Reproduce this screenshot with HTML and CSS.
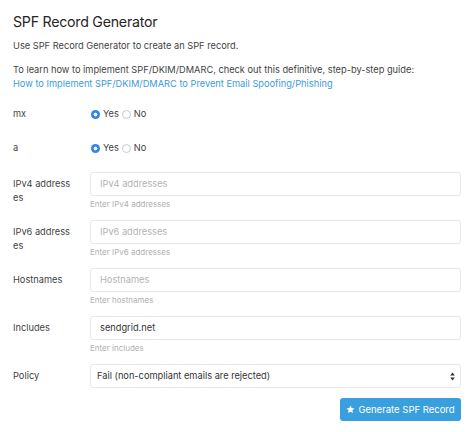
FILE: index.html
```html
<!DOCTYPE html>
<html lang="en">
<head>
<meta charset="utf-8">
<title>SPF Record Generator</title>
<link rel="stylesheet" href="styles.css">
</head>
<body>
<main class="page">
  <h1 class="title">SPF Record Generator</h1>
  <p class="intro">Use SPF Record Generator to create an SPF record.</p>
  <p class="intro guide">To learn how to implement SPF/DKIM/DMARC, check out this definitive, step-by-step guide:<br>
    <a class="link" href="#">How to Implement SPF/DKIM/DMARC to Prevent Email Spoofing/Phishing</a></p>

  <form class="form">
    <div class="row radio-row">
      <label class="label">mx</label>
      <div class="field radios">
        <span class="radio checked"></span><span class="opt">Yes</span>
        <span class="radio"></span><span class="opt">No</span>
      </div>
    </div>
    <div class="row radio-row">
      <label class="label">a</label>
      <div class="field radios">
        <span class="radio checked"></span><span class="opt">Yes</span>
        <span class="radio"></span><span class="opt">No</span>
      </div>
    </div>
    <div class="row">
      <label class="label">IPv4 addresses</label>
      <div class="field">
        <div class="input placeholder">IPv4 addresses</div>
        <div class="help">Enter IPv4 addresses</div>
      </div>
    </div>
    <div class="row">
      <label class="label">IPv6 addresses</label>
      <div class="field">
        <div class="input placeholder">IPv6 addresses</div>
        <div class="help">Enter IPv6 addresses</div>
      </div>
    </div>
    <div class="row">
      <label class="label">Hostnames</label>
      <div class="field">
        <div class="input placeholder">Hostnames</div>
        <div class="help">Enter hostnames</div>
      </div>
    </div>
    <div class="row">
      <label class="label">Includes</label>
      <div class="field">
        <div class="input">sendgrid.net</div>
        <div class="help">Enter includes</div>
      </div>
    </div>
    <div class="row">
      <label class="label">Policy</label>
      <div class="field">
        <div class="input select"><span>Fail (non-compliant emails are rejected)</span>
          <svg class="arrows" width="5" height="9" viewBox="0 0 5 9"><path d="M2.5 0.5 L4.8 3.6 H0.2 Z M2.5 8.5 L4.8 5.4 H0.2 Z" fill="#333"/></svg>
        </div>
      </div>
    </div>
    <div class="actions">
      <button type="button" class="btn">
        <svg class="star" width="9" height="9" viewBox="0 0 24 24"><path d="M12 1.5l3.2 6.8 7.3.9-5.4 5 1.4 7.3L12 17.9l-6.5 3.6 1.4-7.3-5.4-5 7.3-.9z" fill="#fff"/></svg>Generate SPF Record
      </button>
    </div>
  </form>
</main>
</body>
</html>
```

FILE: styles.css
```css
html, body {
  margin: 0;
  padding: 0;
  background: #fff;
}
body {
  font-family: Inter, "Noto Sans", "Liberation Sans", sans-serif;
  font-size: 9.25px;
  color: #3f3f3f;
  line-height: 14px;
}
.page {
  padding: 12px 13px 0 13px;
  width: 448px;
}
.title {
  font-size: 14.2px;
  letter-spacing: -0.25px;
  font-weight: 400;
  line-height: 20px;
  color: #262626;
  margin: 0 0 7px 0;
}
.intro {
  margin: 0 0 10px 0;
}
.guide {
  margin-bottom: 11px;
}
.link {
  color: #3a9bdc;
  text-decoration: none;
}
.form {
  display: flex;
  flex-direction: column;
}
.row {
  display: grid;
  grid-template-columns: 59px 1fr;
  column-gap: 18px;
  margin-bottom: 10px;
}
.radio-row {
  height: 24px;
  margin-bottom: 10px;
  align-items: start;
}
.radio-row + .row:not(.radio-row) {
  margin-top: 2px;
}
.label {
  word-break: break-all;
  padding-top: 5px;
  line-height: 14px;
}
.radios {
  display: flex;
  align-items: center;
  padding-top: 6px;
  height: 12px;
}
.radio {
  width: 9px;
  height: 9px;
  border-radius: 50%;
  border: 1px solid #c9c9c9;
  box-sizing: border-box;
  margin-left: 1px;
  margin-right: 3px;
  background: #fff;
}
.radio.checked {
  border: none;
  background: radial-gradient(circle, #fff 0 1.7px, #2f86e6 2.2px);
}
.opt {
  margin-right: 2px;
}
.input {
  height: 24px;
  box-sizing: border-box;
  border: 1px solid #e7e7e7;
  border-radius: 3px;
  padding: 0 9px;
  display: flex;
  align-items: center;
  color: #333;
}
.placeholder {
  color: #b3b3b3;
}
.select {
  padding-left: 6px;
  justify-content: space-between;
  padding-right: 5px;
}
.help {
  font-size: 8px;
  color: #b0b0b0;
  line-height: 11px;
  margin-top: 3px;
}
.actions {
  display: flex;
  justify-content: flex-end;
  margin-top: 0;
}
.btn {
  background: #3a9fdd;
  color: #fff;
  border: none;
  border-radius: 3px;
  height: 23px;
  width: 121px;
  font-family: inherit;
  font-size: 9.5px;
  display: flex;
  align-items: center;
  justify-content: center;
  gap: 3px;
  padding: 0;
}
```
